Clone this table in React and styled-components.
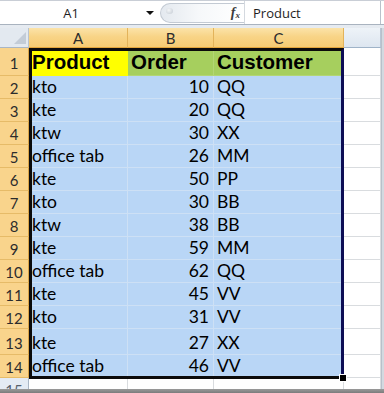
import React from "react";
import styled, { createGlobalStyle } from "styled-components";

const Global = createGlobalStyle`
  html, body { margin: 0; padding: 0; background: #ffffff; }
  #root { width: 384px; height: 393px; }
`;

const Window = styled.div`
  width: 384px;
  height: 393px;
  overflow: hidden;
  display: flex;
  flex-direction: column;
  background: #dfe5ec;
`;

const FormulaBar = styled.div`
  height: 25px;
  flex: none;
  display: flex;
  align-items: stretch;
  background: #ffffff;
  border-top: 1px solid #c9ced6;
  border-bottom: 1px solid #a9b3bf;
  box-sizing: border-box;
  font-family: "Open Sans", "Liberation Sans", sans-serif;
  font-size: 13px;
  color: #1e1e1e;
`;

const NameBox = styled.div`
  width: 142px;
  display: flex;
  align-items: center;
  justify-content: center;
  padding-top: 1px;
`;

const DropArrow = styled.div`
  width: 16px;
  display: flex;
  align-items: center;
  justify-content: center;
  &::after {
    content: "";
    width: 0;
    height: 0;
    border-left: 4px solid transparent;
    border-right: 4px solid transparent;
    border-top: 4px solid #111;
  }
`;

const Splitter = styled.div`
  margin: 2px 0 1px 2px;
  width: 84px;
  border: 1px solid #c3cad3;
  border-right: none;
  border-radius: 11px 0 0 11px;
  background: linear-gradient(to right, #e4e9ef 0%, #f6f8fa 45%, #ffffff 100%);
  display: flex;
  align-items: center;
  justify-content: space-between;
  padding: 0 4px 0 5px;
  box-sizing: border-box;
`;

const Dot = styled.div`
  width: 7px;
  height: 6px;
  border-radius: 50%;
  background: radial-gradient(circle at 40% 35%, #f4f6f8, #c2c9d2);
  margin-top: -4px;
`;

const Fx = styled.div`
  font-family: "Liberation Serif", serif;
  font-style: italic;
  font-weight: bold;
  font-size: 14px;
  color: #3b3b3b;
  sub {
    font-size: 9px;
    vertical-align: -1px;
  }
`;

const FormulaInput = styled.div`
  flex: 1;
  border-left: 1px solid #d4d9df;
  border-right: 1px solid #b9c1cb;
  margin-right: 3px;
  display: flex;
  align-items: center;
  padding-left: 8px;
  padding-top: 1px;
`;

const Gap = styled.div`
  height: 3px;
  flex: none;
  background: #e6ebf1;
`;

const SheetArea = styled.div`
  flex: 1;
  display: flex;
  overflow: hidden;
  min-height: 0;
`;

const Sheet = styled.div`
  position: relative;
  display: grid;
  grid-template-columns: 29px 99px 86px 130px 37px;
  grid-template-rows: 20px 28px repeat(11, 23px) 26px 23px 23px;
  background: #ffffff;
  align-self: flex-start;
  font-family: "Lato", "Open Sans", sans-serif;
`;

const RightEdge = styled.div`
  flex: 1;
  background: #d3d9e0;
  border-left: 1px solid #b8c0ca;
`;

const BottomEdge = styled.div`
  height: 4px;
  flex: none;
  background: linear-gradient(#9a9a9a, #7c7c7c);
`;

const Corner = styled.div`
  box-sizing: border-box;
  background: #e3e9f0;
  border-right: 1px solid #b9c3cf;
  border-bottom: 1px solid #a9b6c5;
  display: flex;
  align-items: flex-end;
  justify-content: flex-end;
  padding: 0 2px 3px 0;
`;

const ColHead = styled.div`
  box-sizing: border-box;
  display: flex;
  align-items: center;
  justify-content: center;
  font-size: 15px;
  color: ${(p) => (p.$sel ? "#2c2c2c" : "#3c4a5a")};
  background: ${(p) =>
    p.$sel
      ? "linear-gradient(#fbe3a9, #f8d487 45%, #f6cb73)"
      : "linear-gradient(#eef3f8, #dde6f0)"};
  border-right: 1px solid ${(p) => (p.$sel ? "#e3b35a" : "#b9c6d4")};
  border-bottom: 1px solid ${(p) => (p.$sel ? "#e3a53c" : "#9fb3c8")};
  padding-top: 1px;
`;

const RowHead = styled.div`
  box-sizing: border-box;
  display: flex;
  align-items: center;
  justify-content: center;
  font-size: 15px;
  padding-top: 2px;
  color: ${(p) => (p.$sel ? "#2c2c2c" : "#55606c")};
  background: ${(p) => (p.$sel ? "#f9d48c" : "#e4ebf4")};
  border-right: 1px solid ${(p) => (p.$sel ? "#d9a346" : "#a9b6c5")};
  border-bottom: 1px solid ${(p) => (p.$sel ? "#e6bb68" : "#c5d0dc")};
`;

const fills = {
  blue: "#b9d6f6",
  yellow: "#ffff00",
  green: "#a6cf5e",
  white: "#ffffff",
};

const lines = {
  blue: "#cde0f5",
  yellow: "#ffff00",
  green: "#b3d674",
  white: "#d9dcdf",
};

const Cell = styled.div`
  box-sizing: border-box;
  display: flex;
  align-items: flex-end;
  justify-content: ${(p) => (p.$right ? "flex-end" : "flex-start")};
  padding: 0 ${(p) => (p.$right ? "4px" : "0")} 1px 3px;
  background: ${(p) => fills[p.$fill]};
  border-right: 1px solid ${(p) => lines[p.$fill]};
  border-bottom: 1px solid ${(p) => lines[p.$fill]};
  color: #000;
  white-space: nowrap;
  overflow: visible;
  font-family: ${(p) =>
    p.$bold ? '"Liberation Sans", Arial, sans-serif' : '"Lato", "Open Sans", sans-serif'};
  font-weight: ${(p) => (p.$bold ? 700 : 400)};
  font-size: ${(p) => (p.$bold ? "20.5px" : "17.5px")};
  line-height: 1.15;
`;

const Selection = styled.div`
  position: absolute;
  left: 29px;
  top: 20px;
  width: 315px;
  height: 331px;
  box-sizing: border-box;
  border: 3px solid #0b0b0b;
  border-right-color: #0d0d55;
  pointer-events: none;
`;

const FillHandle = styled.div`
  position: absolute;
  left: 339px;
  top: 346px;
  width: 6px;
  height: 6px;
  background: #000;
  border: 1px solid #ffffff;
`;

const rows = [
  ["kto", 10, "QQ"],
  ["kte", 20, "QQ"],
  ["ktw", 30, "XX"],
  ["office tab", 26, "MM"],
  ["kte", 50, "PP"],
  ["kto", 30, "BB"],
  ["ktw", 38, "BB"],
  ["kte", 59, "MM"],
  ["office tab", 62, "QQ"],
  ["kte", 45, "VV"],
  ["kto", 31, "VV"],
  ["kte", 27, "XX"],
  ["office tab", 46, "VV"],
];

export default function App() {
  return (
    <>
      <Global />
      <Window>
        <FormulaBar>
          <NameBox>A1</NameBox>
          <DropArrow />
          <Splitter>
            <Dot />
            <Fx>
              f<sub>x</sub>
            </Fx>
          </Splitter>
          <FormulaInput>Product</FormulaInput>
        </FormulaBar>
        <Gap />
        <SheetArea>
          <Sheet>
            <Corner>
              <svg width="12" height="12" viewBox="0 0 12 12">
                <polygon points="12,0 12,12 0,12" fill="#c3ccd7" />
              </svg>
            </Corner>
            <ColHead $sel>A</ColHead>
            <ColHead $sel>B</ColHead>
            <ColHead $sel>C</ColHead>
            <ColHead />

            <RowHead $sel>1</RowHead>
            <Cell $fill="yellow" $bold>Product</Cell>
            <Cell $fill="green" $bold>Order</Cell>
            <Cell $fill="green" $bold>Customer</Cell>
            <Cell $fill="white" />

            {rows.map((r, i) => (
              <React.Fragment key={i}>
                <RowHead $sel>{i + 2}</RowHead>
                <Cell $fill="blue">{r[0]}</Cell>
                <Cell $fill="blue" $right>
                  {r[1]}
                </Cell>
                <Cell $fill="blue">{r[2]}</Cell>
                <Cell $fill="white" />
              </React.Fragment>
            ))}

            <RowHead>15</RowHead>
            <Cell $fill="white" />
            <Cell $fill="white" />
            <Cell $fill="white" />
            <Cell $fill="white" />

            <Selection />
            <FillHandle />
          </Sheet>
          <RightEdge />
        </SheetArea>
        <BottomEdge />
      </Window>
    </>
  );
}
